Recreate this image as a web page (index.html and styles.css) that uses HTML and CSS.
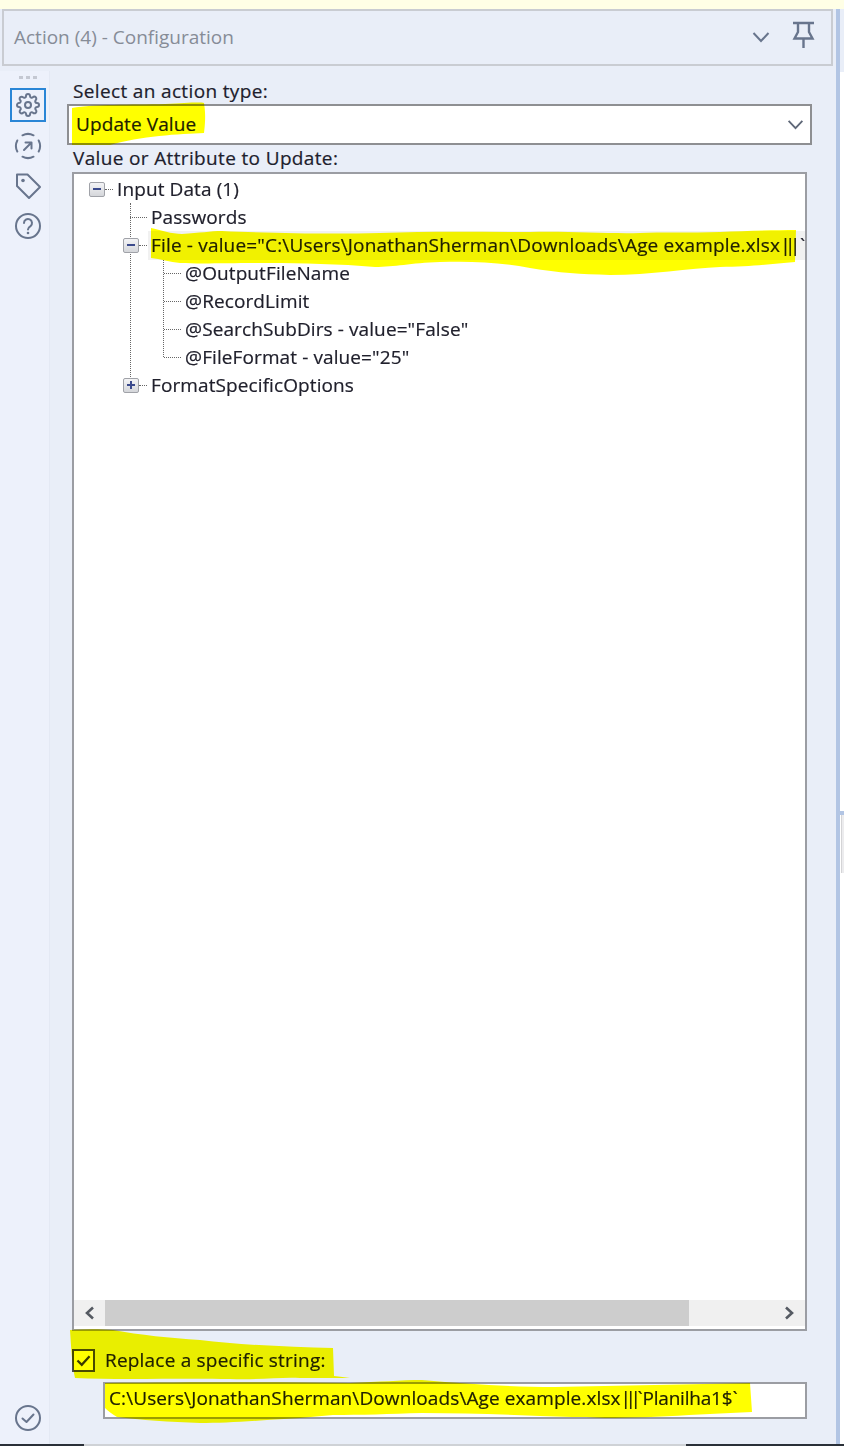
FILE: index.html
```html
<!DOCTYPE html>
<html lang="en">
<head>
<meta charset="utf-8">
<title>Action (4) - Configuration</title>
<link rel="stylesheet" href="styles.css">
</head>
<body>
<div class="app">
  <div class="topband"></div>
  <div class="main">
    <section class="panel">
      <header class="panel-head">
        <h1 class="panel-title">Action (4) - Configuration</h1>
        <svg class="head-chevron" viewBox="0 0 18 12"><path d="M1.5 2 9 10l7.5-8"/></svg>
        <svg class="head-pin" viewBox="0 0 24 28"><path d="M2 2h21M7 2v9L3.500 17.500h18L18 11V2M12.500 18v9"/></svg>
      </header>
      <div class="panel-body">
        <nav class="sidebar">
          <div class="grip"><i></i><i></i><i></i></div>
          <div class="tool tool-active">
            <svg class="icon" viewBox="0 0 24 24"><circle cx="12" cy="12" r="3"/><path d="M19.400 15a1.650 1.650 0 0 0 .33 1.820l.06.06a2 2 0 0 1 0 2.830 2 2 0 0 1-2.830 0l-.06-.06a1.650 1.650 0 0 0-1.820-.33 1.650 1.650 0 0 0-1 1.510V21a2 2 0 0 1-2 2 2 2 0 0 1-2-2v-.09A1.650 1.650 0 0 0 9 19.400a1.650 1.650 0 0 0-1.820.33l-.06.06a2 2 0 0 1-2.830 0 2 2 0 0 1 0-2.830l.06-.06a1.650 1.650 0 0 0 .33-1.820 1.650 1.650 0 0 0-1.510-1H3a2 2 0 0 1-2-2 2 2 0 0 1 2-2h.09A1.650 1.650 0 0 0 4.600 9a1.650 1.650 0 0 0-.33-1.820l-.06-.06a2 2 0 0 1 0-2.830 2 2 0 0 1 2.830 0l.06.06a1.650 1.650 0 0 0 1.820.33H9a1.650 1.650 0 0 0 1-1.510V3a2 2 0 0 1 2-2 2 2 0 0 1 2 2v.09a1.650 1.650 0 0 0 1 1.510 1.650 1.650 0 0 0 1.820-.33l.06-.06a2 2 0 0 1 2.830 0 2 2 0 0 1 0 2.830l-.06.06a1.650 1.650 0 0 0-.33 1.820V9a1.650 1.650 0 0 0 1.510 1H21a2 2 0 0 1 2 2 2 2 0 0 1-2 2h-.09a1.650 1.650 0 0 0-1.510 1z"/></svg>
          </div>
          <div class="tool">
            <svg class="icon icon-lg" viewBox="0 0 28 28"><path d="M8.500 3.300A12 12 0 0 1 19.500 3.300M24.700 8.500A12 12 0 0 1 24.700 19.500M19.500 24.700A12 12 0 0 1 8.500 24.700M3.300 19.500A12 12 0 0 1 3.300 8.500"/><path d="M10 18l7.500-7.500M11.500 10.500h6v6"/></svg>
          </div>
          <div class="tool">
            <svg class="icon icon-lg" viewBox="0 0 28 28"><path d="M3 2.500h10.500L26 15 15 26 3 14z"/><circle class="fill" cx="9" cy="8.500" r="1.800"/></svg>
          </div>
          <div class="tool">
            <svg class="icon icon-lg" viewBox="0 0 28 28"><circle cx="14" cy="14" r="12"/><path d="M10 11a4 4 0 1 1 6.500 3.100c-1.500 1-2.500 1.700-2.500 3.400"/><circle class="fill" cx="14" cy="21" r="1.300"/></svg>
          </div>
          <div class="tool tool-bottom">
            <svg class="icon icon-lg" viewBox="0 0 28 28"><circle cx="14" cy="14" r="12"/><path d="M8.500 14.500l4 3.500 7-7.500"/></svg>
          </div>
        </nav>
        <div class="form">
          <label class="field-label">Select an action type:</label>
          <div class="select">
            <span>Update Value</span>
            <svg class="select-chevron" viewBox="0 0 18 12"><path d="M1.500 2 9 10l7.500-8"/></svg>
          </div>
          <label class="field-label field-label-second">Value or Attribute to Update:</label>
          <div class="tree">
            <i class="vline vline-one"></i>
            <i class="vline vline-two"></i>
            <ul class="rows">
              <li class="row lvl0"><span class="exp minus"></span><i class="stub"></i><span class="txt">Input Data (1)</span></li>
              <li class="row lvl1"><i class="stub stub-leaf"></i><span class="txt">Passwords</span></li>
              <li class="row lvl1"><span class="exp minus"></span><i class="stub"></i><span class="txt txt-selected">File - value="C:\Users\JonathanSherman\Downloads\Age example.xlsx<span class="pipes">|||</span>`P</span></li>
              <li class="row lvl2"><i class="stub stub-leaf"></i><span class="txt">@OutputFileName</span></li>
              <li class="row lvl2"><i class="stub stub-leaf"></i><span class="txt">@RecordLimit</span></li>
              <li class="row lvl2"><i class="stub stub-leaf"></i><span class="txt">@SearchSubDirs - value="False"</span></li>
              <li class="row lvl2"><i class="stub stub-leaf"></i><span class="txt">@FileFormat - value="25"</span></li>
              <li class="row lvl1"><span class="exp plus"></span><i class="stub"></i><span class="txt">FormatSpecificOptions</span></li>
            </ul>
            <div class="hscroll">
              <svg class="arrow" viewBox="0 0 12 14"><path d="M9.500 1.500 3.500 7l6 5.500"/></svg>
              <div class="thumb-track"><div class="thumb"></div></div>
              <svg class="arrow" viewBox="0 0 12 14"><path d="M2.500 1.500 8.500 7l-6 5.500"/></svg>
            </div>
          </div>
          <div class="check-row">
            <span class="checkbox"><svg viewBox="0 0 22 22"><path d="M4 11l5 5 9-10"/></svg></span>
            <span class="check-label">Replace a specific string:</span>
          </div>
          <div class="text-input">C:\Users\JonathanSherman\Downloads\Age example.xlsx<span class="pipes">|||</span><span class="tail">`Planilha1$`</span></div>
        </div>
      </div>
    </section>
    <div class="edge"></div>
    <div class="side-window">
      <div class="sw-top"></div>
      <div class="sw-white"></div>
      <div class="sw-bar"></div>
      <div class="sw-box"></div>
      <div class="sw-white sw-rest"></div>
    </div>
  </div>
  <footer class="bottom"><i class="dark dark-left"></i><i class="light"></i><i class="dark dark-right"></i></footer>
  <svg class="marker" viewBox="0 0 844 1446" aria-hidden="true">
    <path d="M72 108C95 104 130 105 165 104C185 103 200 102 204 103C206 115 205 125 204 133C180 134 140 136 110 145L72 145Z"/>
    <path d="M151 228C160 230 172 234 182 234C200 233 210 231 222 231C290 234 340 234 380 233C430 231 480 232 530 232C570 231 610 234 640 233C660 232 690 233 720 232C745 231 775 230 796 230L795 262C770 264 750 267 720 267C690 268 650 275 610 275C580 274 560 273 530 268C500 262 470 261 440 262C410 263 395 267 375 267C340 264 300 263 270 263C230 263 200 264 180 263C170 262 160 259 151 258Z"/>
    <path d="M70 1330C85 1329 100 1329 113 1330C140 1335 170 1338 200 1340C240 1345 290 1347 333 1348L334 1376C340 1377 345 1377 350 1378L300 1378C280 1377 260 1380 230 1379C180 1378 120 1380 75 1378C72 1365 71 1345 70 1330Z"/>
    <path d="M105 1383C200 1382 280 1382 350 1383C380 1382 400 1380 422 1380C470 1384 510 1387 555 1387C620 1386 690 1384 750 1383L752 1412C730 1413 710 1414 689 1415C660 1417 630 1418 605 1418C590 1417 580 1417 572 1417C520 1415 470 1413 422 1413C390 1414 360 1415 333 1415C310 1417 290 1419 267 1420C240 1422 220 1423 200 1423C170 1422 140 1420 117 1417C112 1414 108 1411 105 1408Z"/>
  </svg>
</div>
</body>
</html>
```

FILE: styles.css
```css
* { box-sizing: border-box; }
html, body { margin: 0; padding: 0; }
body {
  width: 844px;
  height: 1446px;
  overflow: hidden;
  background: #ffffff;
  font-family: "Open Sans", "Noto Sans", "Liberation Sans", sans-serif;
  color: #20202c;
}
.app {
  position: relative;
  width: 844px;
  height: 1446px;
  display: flex;
  flex-direction: column;
  filter: blur(0.45px);
}
.topband { height: 9px; background: #ffffe6; flex: none; }
.main { flex: 1; display: flex; min-height: 0; }
.panel {
  width: 836px;
  background: #e9eef8;
  display: flex;
  flex-direction: column;
}
.panel-head {
  margin: 0 3px 0 2px;
  height: 57px;
  border: 2px solid #c9ccd2;
  display: flex;
  align-items: center;
  padding: 0 14px 0 10px;
  flex: none;
}
.panel-title {
  margin: 0 0 1px;
  flex: 1;
  font-size: 19px;
  font-weight: 400;
  color: #868c97;
}
.head-chevron { width: 18px; height: 12px; margin: 0 21px 1px 0; fill: none; stroke: #68758d; stroke-width: 2; }
.head-pin { width: 24px; height: 28px; margin: -5px 2px 0 0; fill: none; stroke: #68758d; stroke-width: 2.4; }

.panel-body { flex: 1; display: flex; min-height: 0; }
.sidebar {
  width: 50px;
  margin-top: 5px;
  padding: 3px 0 6px 6px;
  background: #edf1fb;
  border-right: 1px solid #e4e9f4;
  display: flex;
  flex-direction: column;
  align-items: center;
  flex: none;
}
.grip { display: flex; gap: 3px; height: 11px; flex: none; }
.grip i { width: 4px; height: 3px; margin-top: 2px; background: #c4c8d2; }
.tool {
  width: 36px;
  height: 40px;
  display: flex;
  align-items: center;
  justify-content: center;
  flex: none;
}
.tool-active { height: 34px; margin: 3px 0 4px; border: 2px solid #2a86d6; }
.tool-bottom { margin-top: auto; }
.icon { width: 24px; height: 24px; fill: none; stroke: #68758d; stroke-width: 2; stroke-linecap: round; stroke-linejoin: round; }
.icon-lg { width: 28px; height: 28px; }
.icon .fill { fill: #68758d; stroke: none; }

.form {
  flex: 1;
  display: flex;
  flex-direction: column;
  padding: 13px 29px 25px 22px;
  min-width: 0;
  font-size: 19px;
  letter-spacing: 0.1px;
  -webkit-text-stroke: 0.2px;
}
.field-label {
  height: 25px;
  line-height: 24px;
  padding-left: 1px;
  letter-spacing: 0.35px;
  flex: none;
}
.field-label-second { height: 26px; margin-top: 1px; }
.select {
  height: 41px;
  margin: 0 -5px;
  border: 2px solid #8e8f92;
  background: #fff;
  display: flex;
  align-items: center;
  justify-content: space-between;
  padding: 0 6px 2px 7px;
  flex: none;
}
.select-chevron { width: 17px; height: 11px; margin-top: 2px; fill: none; stroke: #5f6878; stroke-width: 2; }

.tree {
  position: relative;
  flex: 1;
  min-height: 0;
  display: flex;
  flex-direction: column;
  border: 2px solid #9b9da3;
  background: #fff;
}
.rows { flex: 1; margin: 0; padding: 1px 0 0; list-style: none; min-height: 0; overflow: hidden; }
.row { height: 28px; display: flex; align-items: center; white-space: nowrap; }
.lvl0 { padding-left: 15px; }
.lvl1 { padding-left: 49px; }
.lvl2 { padding-left: 83px; }
.txt { margin-left: 4px; }
.txt-selected {
  flex: 1;
  min-width: 0;
  height: 29px;
  line-height: 28px;
  margin-left: 1px;
  padding-left: 3px;
  overflow: hidden;
  letter-spacing: 0.17px;
  background: #f1f1f1;
}
.pipes { letter-spacing: -5.5px; margin-right: 5px; }
.text-input .pipes { margin-right: 2px; }
.tail { letter-spacing: -0.2px; }
.exp {
  position: relative;
  width: 16px;
  height: 15px;
  flex: none;
  border: 1px solid #a0a2a8;
  border-radius: 2px;
  background: linear-gradient(#f4f4f6, #d4d6da);
}
.exp::before {
  content: "";
  position: absolute;
  left: 3px;
  top: 5px;
  width: 8px;
  height: 2px;
  background: #3b4a8c;
}
.plus::after {
  content: "";
  position: absolute;
  left: 6px;
  top: 2px;
  width: 2px;
  height: 8px;
  background: #3b4a8c;
}
.stub { width: 8px; height: 0; flex: none; border-top: 1px dotted #666; }
.stub-leaf { width: 17px; margin-left: 7px; }
.vline { position: absolute; width: 0; border-left: 1px dotted #666; }
.vline-one { left: 56px; top: 29px; height: 174px; }
.vline-two { left: 89px; top: 86px; height: 97px; }

.hscroll { height: 26px; margin: 0 0 3px; display: flex; align-items: stretch; background: #f0f0f0; flex: none; }
.arrow { width: 31px; height: 14px; align-self: center; fill: none; stroke: #555a62; stroke-width: 2.600; }
.thumb-track { flex: 1; }
.thumb { width: 584px; height: 100%; background: #cdcdcd; }

.check-row { height: 24px; margin-top: 17px; display: flex; align-items: center; flex: none; }
.checkbox { width: 23px; height: 23px; border: 2px solid #4a4a4a; flex: none; background: #fff; display: flex; }
.checkbox svg { width: 19px; height: 19px; fill: none; stroke: #3a3a3a; stroke-width: 2.6; }
.check-label { margin-left: 10px; letter-spacing: 0.2px; }
.text-input {
  height: 37px;
  margin: 10px 0 0 31px;
  border: 2px solid #9b9da3;
  background: #fff;
  padding-left: 4px;
  line-height: 29px;
  white-space: nowrap;
  flex: none;
}

.edge { width: 4px; background: #b2c5e4; flex: none; }
.side-window { flex: 1; display: flex; flex-direction: column; background: #fff; }
.sw-top { height: 63px; background: #e9eef8; }
.sw-white { height: 739px; }
.sw-bar { height: 4px; background: #b2c5e4; }
.sw-box { height: 58px; margin-left: 1px; background: #ececee; border-left: 1px solid #d4d4d6; }
.sw-rest { flex: 1; height: auto; }

.bottom { height: 2px; display: flex; flex: none; }
.bottom i { display: block; height: 2px; }
.bottom .dark { background: #2a3038; }
.bottom .dark-left { width: 84px; }
.bottom .light { flex: 1; background: #cfd2d6; }
.bottom .dark-right { width: 158px; }

.marker {
  position: absolute;
  left: 0;
  top: 0;
  width: 844px;
  height: 1446px;
  pointer-events: none;
  mix-blend-mode: multiply;
}
.marker path { fill: #ffff00; }
```
